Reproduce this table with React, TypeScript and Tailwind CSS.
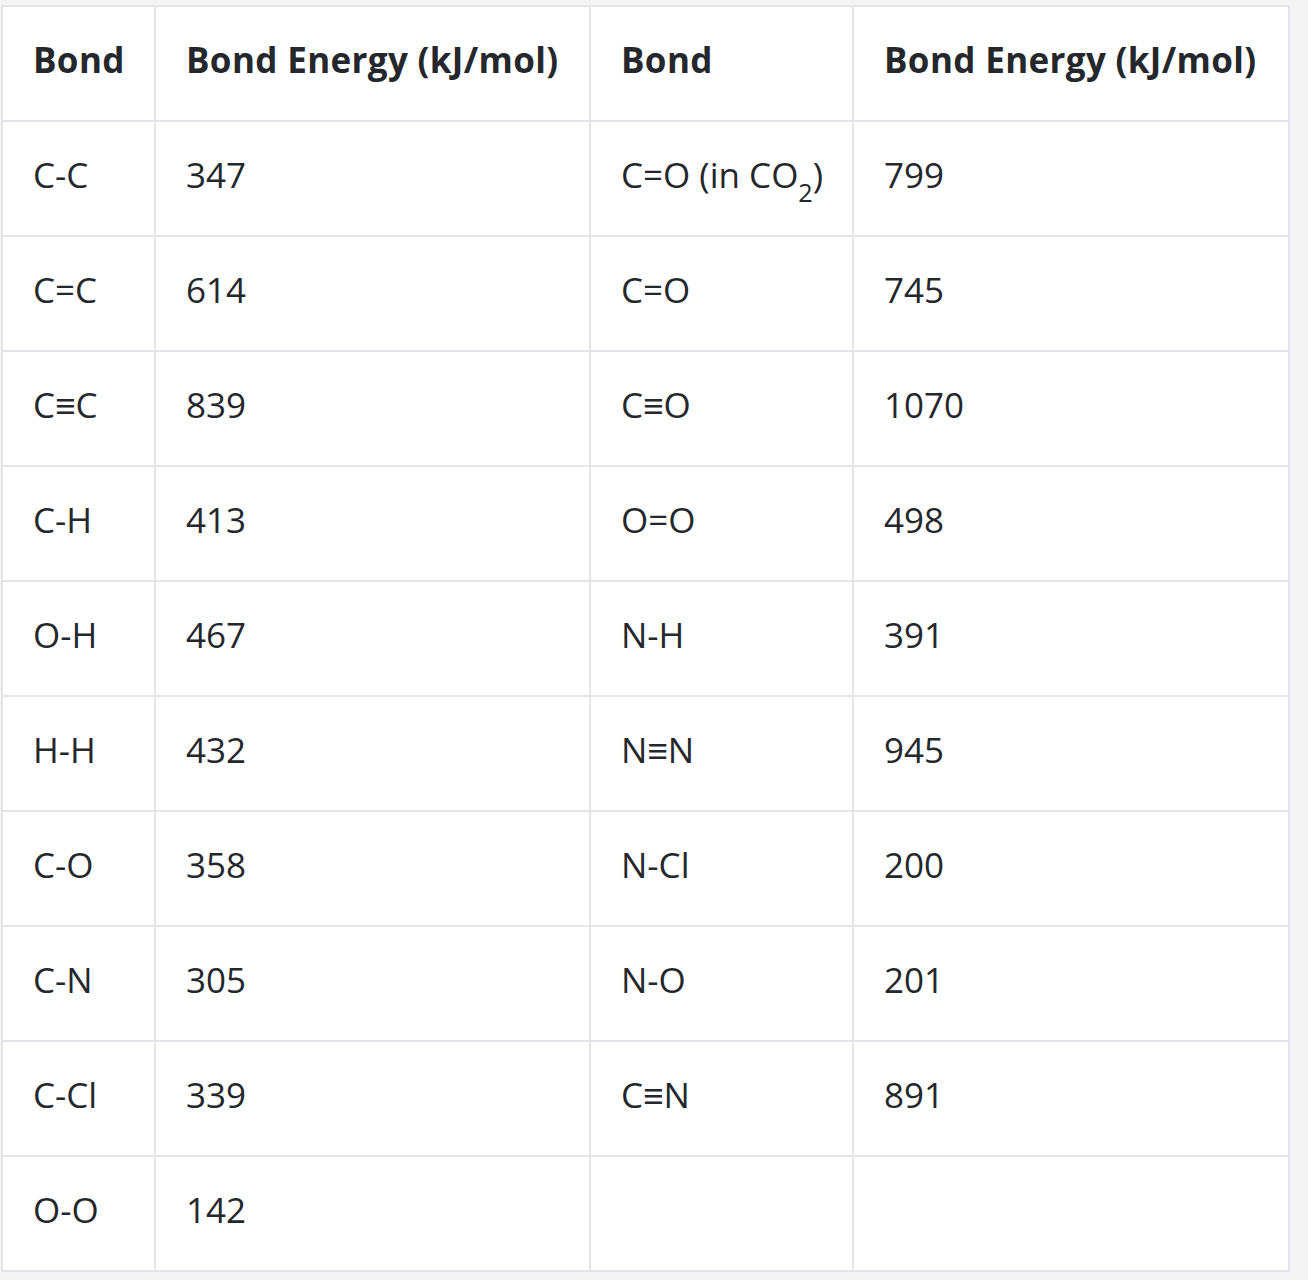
import React from "react";

type Row = [React.ReactNode, string, React.ReactNode, string];

const rows: Row[] = [
  ["C-C", "347", <>C=O (in CO<sub className="text-[0.72em] align-[-0.3em]">2</sub>)</>, "799"],
  ["C=C", "614", "C=O", "745"],
  ["C≡C", "839", "C≡O", "1070"],
  ["C-H", "413", "O=O", "498"],
  ["O-H", "467", "N-H", "391"],
  ["H-H", "432", "N≡N", "945"],
  ["C-O", "358", "N-Cl", "200"],
  ["C-N", "305", "N-O", "201"],
  ["C-Cl", "339", "C≡N", "891"],
  ["O-O", "142", "", ""],
];

const cell = "border-2 border-[#e3e5e8] pl-[30px] pr-2 pb-[8px] align-middle";
const head = `${cell} text-left font-bold tracking-[0.01em]`;

const App: React.FC = () => {
  return (
    <div
      className="min-h-screen bg-[#f4f4f5] pt-[5px] pl-[1px]"
      style={{ fontFamily: "'Open Sans', 'Noto Sans', sans-serif" }}
    >
      <table className="w-[1287px] table-fixed border-collapse bg-white text-[35px] leading-none text-[#24272b]">
        <colgroup>
          <col className="w-[153px]" />
          <col className="w-[435px]" />
          <col className="w-[263px]" />
          <col className="w-[436px]" />
        </colgroup>
        <thead>
          <tr className="h-[115px]">
            <th className={head}>Bond</th>
            <th className={head}>Bond Energy (kJ/mol)</th>
            <th className={head}>Bond</th>
            <th className={head}>Bond Energy (kJ/mol)</th>
          </tr>
        </thead>
        <tbody>
          {rows.map((r, i) => (
            <tr key={i} className="h-[115px]">
              <td className={cell}>{r[0]}</td>
              <td className={cell}>{r[1]}</td>
              <td className={cell}>{r[2]}</td>
              <td className={cell}>{r[3]}</td>
            </tr>
          ))}
        </tbody>
      </table>
    </div>
  );
};

export default App;
